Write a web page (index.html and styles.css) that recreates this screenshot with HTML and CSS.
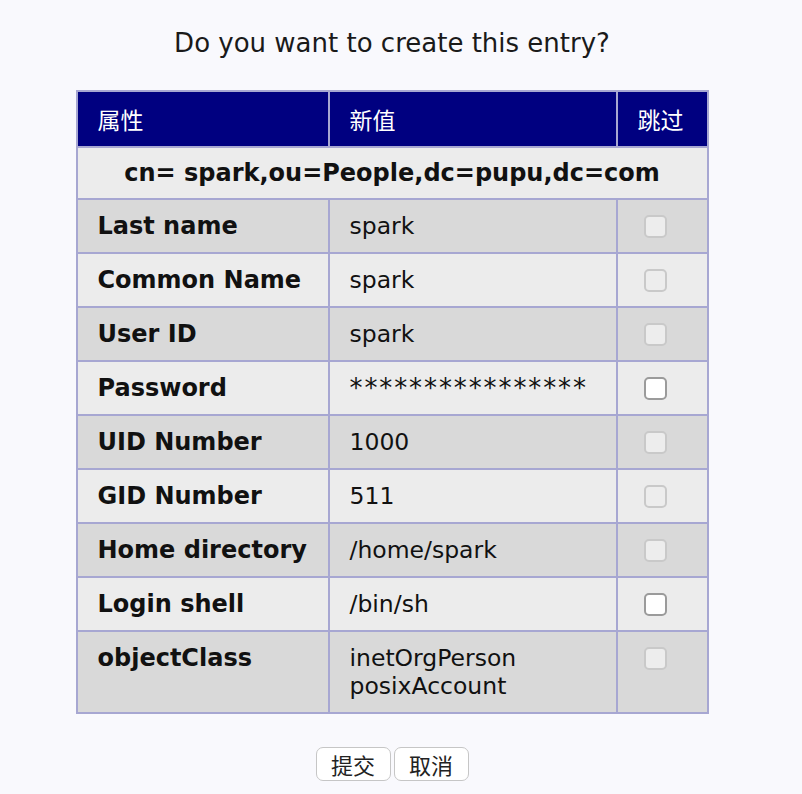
FILE: index.html
```html
<!DOCTYPE html>
<html>
<head>
<meta charset="utf-8">
<link rel="stylesheet" href="styles.css">
</head>
<body>
<div class="page">
  <h3 class="title">Do you want to create this entry?</h3>
  <table class="entry">
    <thead>
      <tr class="head">
        <th class="c-attr">属性</th>
        <th class="c-val">新值</th>
        <th class="c-skip">跳过</th>
      </tr>
    </thead>
    <tbody>
      <tr class="dn"><td colspan="3">cn= spark,ou=People,dc=pupu,dc=com</td></tr>
      <tr class="dark"><td class="attr">Last name</td><td class="val">spark</td><td class="skip"><span class="cb dis"></span></td></tr>
      <tr class="light"><td class="attr">Common Name</td><td class="val">spark</td><td class="skip"><span class="cb dis"></span></td></tr>
      <tr class="dark"><td class="attr">User ID</td><td class="val">spark</td><td class="skip"><span class="cb dis"></span></td></tr>
      <tr class="light"><td class="attr">Password</td><td class="val"><span class="pw">****************</span></td><td class="skip"><span class="cb"></span></td></tr>
      <tr class="dark"><td class="attr">UID Number</td><td class="val">1000</td><td class="skip"><span class="cb dis"></span></td></tr>
      <tr class="light"><td class="attr">GID Number</td><td class="val">511</td><td class="skip"><span class="cb dis"></span></td></tr>
      <tr class="dark"><td class="attr">Home directory</td><td class="val">/home/spark</td><td class="skip"><span class="cb dis"></span></td></tr>
      <tr class="light"><td class="attr">Login shell</td><td class="val">/bin/sh</td><td class="skip"><span class="cb"></span></td></tr>
      <tr class="dark"><td class="attr">objectClass</td><td class="val">inetOrgPerson<br>posixAccount</td><td class="skip"><span class="cb dis"></span></td></tr>
    </tbody>
  </table>
  <div class="actions">
    <button class="btn">提交</button><button class="btn">取消</button>
  </div>
</div>
</body>
</html>
```
FILE: styles.css
```css
html, body {
  margin: 0;
  padding: 0;
  background: #f9f9fd;
}
body {
  font-family: "DejaVu Sans", Verdana, "Noto Sans CJK SC", sans-serif;
  color: #111;
}
.page {
  width: 784px;
  display: flex;
  flex-direction: column;
  align-items: center;
  padding-top: 29px;
}
.title {
  margin: 0 0 32px 0;
  font-size: 26px;
  font-weight: normal;
  line-height: 29px;
  color: #1a1a1a;
}
.entry {
  border-collapse: collapse;
  border: 2px solid #a7a7d2;
  font-size: 23.5px;
  line-height: 28px;
}
.entry th, .entry td {
  border: 2px solid #a7a7d2;
  vertical-align: top;
  text-align: left;
}
.head th {
  background: #000080;
  color: #ffffff;
  font-weight: normal;
  font-family: "Noto Sans CJK SC", "DejaVu Sans", sans-serif;
  font-size: 23px;
  padding: 13px 20px 13px 20px;
  height: 28px;
}
.c-attr { width: 210px; }
.c-val { width: 246px; }
.c-skip { width: 49px; }
.dn td {
  background: #ececec;
  text-align: center;
  font-weight: bold;
  font-size: 24px;
  padding: 11px 10px;
}
.dark td { background: #d9d9d9; }
.light td { background: #ececec; }
.attr {
  font-weight: bold;
  font-size: 24px;
  padding: 12px 20px 12px 20px;
}
.val {
  padding: 12px 20px 12px 20px;
}
.pw {
  display: inline-block;
  font-size: 26px;
  line-height: 28px;
  height: 28px;
  letter-spacing: 1.9px;
  vertical-align: top;
  white-space: nowrap;
}
.skip {
  padding: 15px 10px 10px 26px;
}
.cb {
  display: block;
  box-sizing: border-box;
  width: 23px;
  height: 23px;
  border: 2px solid #9b9b9b;
  border-radius: 5px;
  background: #ffffff;
}
.cb.dis {
  border-color: #c9c9c9;
  background: #ededed;
}
.actions {
  margin-top: 33px;
  display: flex;
  gap: 3px;
}
.btn {
  font-family: "Noto Sans CJK SC", sans-serif;
  font-size: 22px;
  line-height: 26px;
  padding: 3px 14px 3px 14px;
  height: 34px;
  width: 75px;
  background: #ffffff;
  border: 1.5px solid #c6c6c6;
  border-radius: 7px;
  color: #222;
}
```
